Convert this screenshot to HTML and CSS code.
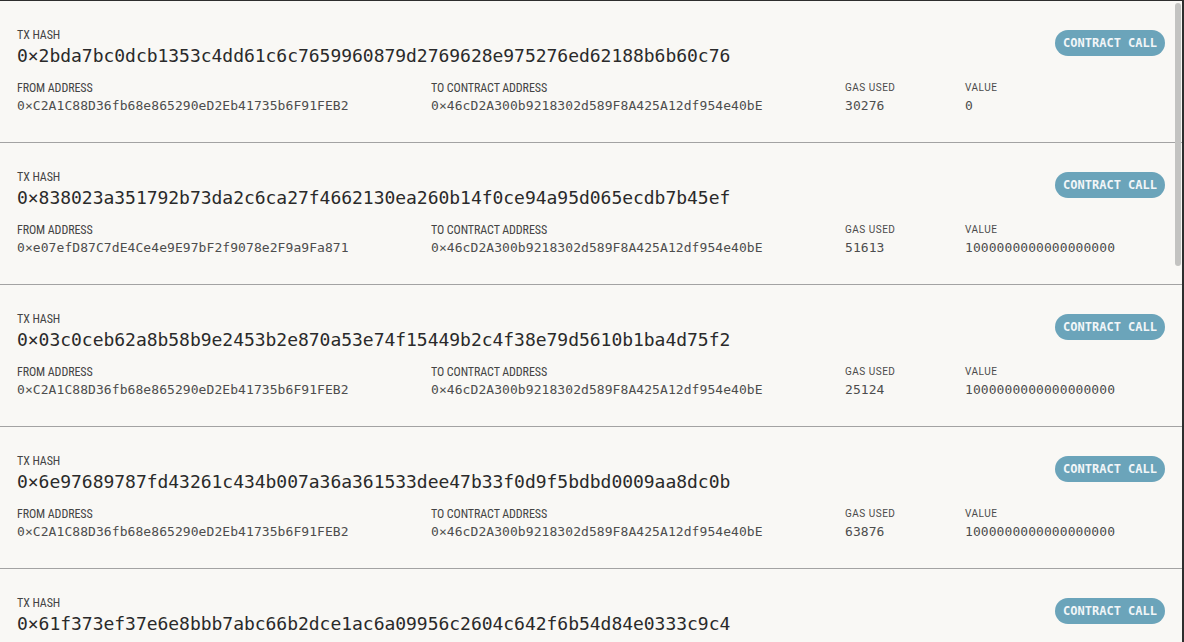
FILE: index.html
```html
<!DOCTYPE html>
<html lang="en">
<head>
<meta charset="utf-8">
<title>Transactions</title>
<link rel="stylesheet" href="styles.css">
</head>
<body>
<div class="frame">
  <div class="list">
    <div class="tx">
      <div class="tx-head">
        <div class="hash-block">
          <div class="label">TX HASH</div>
          <div class="hash">0×2bda7bc0dcb1353c4dd61c6c7659960879d2769628e975276ed62188b6b60c76</div>
        </div>
        <span class="badge">CONTRACT CALL</span>
      </div>
      <div class="fields">
        <div class="field"><div class="label">FROM ADDRESS</div><div class="value">0×C2A1C88D36fb68e865290eD2Eb41735b6F91FEB2</div></div>
        <div class="field"><div class="label">TO CONTRACT ADDRESS</div><div class="value">0×46cD2A300b9218302d589F8A425A12df954e40bE</div></div>
        <div class="field"><div class="label spaced">GAS USED</div><div class="value">30276</div></div>
        <div class="field"><div class="label spaced">VALUE</div><div class="value">0</div></div>
      </div>
    </div>
    <div class="tx">
      <div class="tx-head">
        <div class="hash-block">
          <div class="label">TX HASH</div>
          <div class="hash">0×838023a351792b73da2c6ca27f4662130ea260b14f0ce94a95d065ecdb7b45ef</div>
        </div>
        <span class="badge">CONTRACT CALL</span>
      </div>
      <div class="fields">
        <div class="field"><div class="label">FROM ADDRESS</div><div class="value">0×e07efD87C7dE4Ce4e9E97bF2f9078e2F9a9Fa871</div></div>
        <div class="field"><div class="label">TO CONTRACT ADDRESS</div><div class="value">0×46cD2A300b9218302d589F8A425A12df954e40bE</div></div>
        <div class="field"><div class="label spaced">GAS USED</div><div class="value">51613</div></div>
        <div class="field"><div class="label spaced">VALUE</div><div class="value">1000000000000000000</div></div>
      </div>
    </div>
    <div class="tx">
      <div class="tx-head">
        <div class="hash-block">
          <div class="label">TX HASH</div>
          <div class="hash">0×03c0ceb62a8b58b9e2453b2e870a53e74f15449b2c4f38e79d5610b1ba4d75f2</div>
        </div>
        <span class="badge">CONTRACT CALL</span>
      </div>
      <div class="fields">
        <div class="field"><div class="label">FROM ADDRESS</div><div class="value">0×C2A1C88D36fb68e865290eD2Eb41735b6F91FEB2</div></div>
        <div class="field"><div class="label">TO CONTRACT ADDRESS</div><div class="value">0×46cD2A300b9218302d589F8A425A12df954e40bE</div></div>
        <div class="field"><div class="label spaced">GAS USED</div><div class="value">25124</div></div>
        <div class="field"><div class="label spaced">VALUE</div><div class="value">1000000000000000000</div></div>
      </div>
    </div>
    <div class="tx">
      <div class="tx-head">
        <div class="hash-block">
          <div class="label">TX HASH</div>
          <div class="hash">0×6e97689787fd43261c434b007a36a361533dee47b33f0d9f5bdbd0009aa8dc0b</div>
        </div>
        <span class="badge">CONTRACT CALL</span>
      </div>
      <div class="fields">
        <div class="field"><div class="label">FROM ADDRESS</div><div class="value">0×C2A1C88D36fb68e865290eD2Eb41735b6F91FEB2</div></div>
        <div class="field"><div class="label">TO CONTRACT ADDRESS</div><div class="value">0×46cD2A300b9218302d589F8A425A12df954e40bE</div></div>
        <div class="field"><div class="label spaced">GAS USED</div><div class="value">63876</div></div>
        <div class="field"><div class="label spaced">VALUE</div><div class="value">1000000000000000000</div></div>
      </div>
    </div>
    <div class="tx">
      <div class="tx-head">
        <div class="hash-block">
          <div class="label">TX HASH</div>
          <div class="hash">0×61f373ef37e6e8bbb7abc66b2dce1ac6a09956c2604c642f6b54d84e0333c9c4</div>
        </div>
        <span class="badge">CONTRACT CALL</span>
      </div>
    </div>
  </div>
  <div class="scroll-thumb"></div>
</div>
</body>
</html>
```

FILE: styles.css
```css
* { box-sizing: border-box; }
html, body { margin: 0; padding: 0; }
body {
  background: #f9f8f5;
  width: 1184px;
  height: 642px;
  overflow: hidden;
}
.frame {
  position: relative;
  height: 642px;
  border-top: 1px solid #2e2e2e;
  border-right: 2px solid #2e2e2e;
  background: #f9f8f5;
  overflow: hidden;
}
.list { display: flex; flex-direction: column; }
.tx {
  height: 142px;
  flex: none;
  padding: 27px 17px 0 17px;
  border-bottom: 1px solid #a3a3a3;
}
.tx-head {
  display: flex;
  justify-content: space-between;
  align-items: flex-start;
}
.label {
  font-family: "Roboto Condensed", "Liberation Sans Narrow", Roboto, sans-serif;
  font-size: 12px;
  line-height: 14px;
  color: #444;
  letter-spacing: -0.08px;
}
.label.spaced {
  font-family: Roboto, sans-serif;
  font-size: 10px;
  letter-spacing: 0.5px;
  color: #4a4a4a;
}
.hash {
  margin-top: 3px;
  font-family: "DejaVu Sans Mono", monospace;
  font-size: 18px;
  line-height: 22px;
  letter-spacing: -0.03px;
  color: #2a2a2a;
}
.badge {
  margin-top: 2px;
  height: 26px;
  padding: 0 8px;
  border-radius: 13px;
  background: #6ba4ba;
  color: #f2f6f8;
  font-family: "DejaVu Sans Mono", monospace;
  font-size: 12px;
  line-height: 26px;
  font-weight: bold;
  white-space: nowrap;
}
.fields {
  margin-top: 14px;
  display: grid;
  grid-template-columns: 414px 414px 120px 1fr;
}
.value {
  margin-top: 3px;
  font-family: "DejaVu Sans Mono", monospace;
  font-size: 13px;
  line-height: 16px;
  letter-spacing: 0.07px;
  color: #4d4d4d;
}
.scroll-thumb {
  position: absolute;
  top: 2px;
  right: 1px;
  width: 6px;
  height: 263px;
  border-radius: 3px;
  background: #c3c3c1;
}
```
